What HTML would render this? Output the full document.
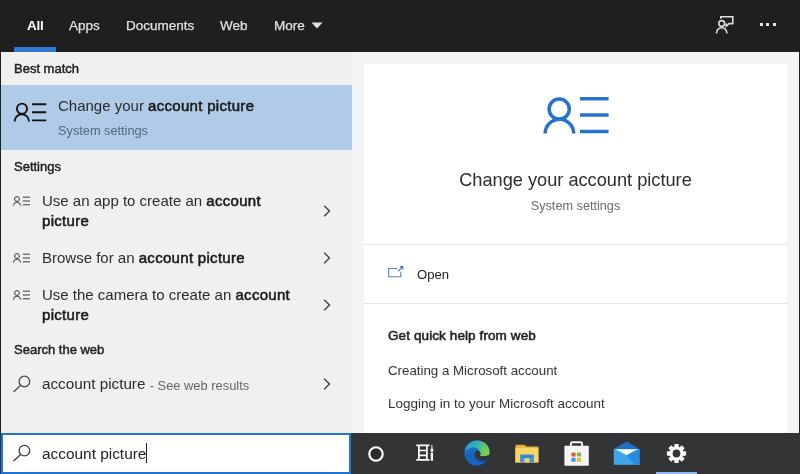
<!DOCTYPE html>
<html>
<head>
<meta charset="utf-8">
<title>Search</title>
<style>
*{box-sizing:border-box;margin:0;padding:0}
html,body{width:800px;height:474px;overflow:hidden;background:#f4f4f4;font-family:"Liberation Sans",sans-serif;color:#1a1a1a}
body{position:relative}
.abs{position:absolute}
.tab,.hdr,.item,.sub,.rt,#search span{will-change:transform}
#topbar{left:0;top:0;width:800px;height:51.8px;background:#1f1f1f}
.tab{position:absolute;top:16.5px;font-size:13.5px;-webkit-text-stroke:0.25px #e0e0e0;color:#e0e0e0;white-space:nowrap;line-height:18px}
.tab.sel{color:#fff;font-weight:bold;-webkit-text-stroke:0}
#underline{left:14.4px;top:47px;width:41.2px;height:5px;background:#2f7bd4}
#leftedge{left:0;top:0;width:1px;height:474px;background:#1f1f1f}
#left{left:0;top:52px;width:351.7px;height:381px;background:#f0f0f0}
.hdr{position:absolute;left:14px;font-size:13px;letter-spacing:0;font-weight:normal;-webkit-text-stroke:0.45px #222;color:#222;line-height:16px;white-space:nowrap}
#selrow{left:1px;top:84.7px;width:350.7px;height:65.2px;background:#afcbe8}
.item{position:absolute;left:42px;font-size:15px;line-height:20px;color:#2c2c2c;white-space:nowrap}
.item b{font-weight:normal;font-size:15px;letter-spacing:0.3px;-webkit-text-stroke:0.55px #1a1a1a;color:#1a1a1a}
.sub{position:absolute;font-size:12.75px;color:#666;white-space:nowrap}
.chev{position:absolute;left:322px;width:10px;height:14px}
#right{left:364px;top:64px;width:423px;height:370px;background:#fff}
.sep{position:absolute;left:364px;width:423px;height:1px;background:#e6e6e6}
.rt{position:absolute;white-space:nowrap}
#taskbar{left:0;top:432.6px;width:800px;height:41.4px;background:#323436}
#search{left:1px;top:432.5px;width:350.1px;height:41.5px;background:#2274d2}
#search i{position:absolute;left:2.2px;top:2.4px;right:2.1px;bottom:2.4px;background:#fff}
#search span{position:absolute;left:41px;top:11.7px;font-size:15.4px;color:#222;line-height:20px;white-space:nowrap}
#caret{left:146px;top:442.5px;width:1px;height:20.5px;background:#222}
</style>
</head>
<body>
<div id="left" class="abs"></div>
<div id="topbar" class="abs"></div>
<div id="leftedge" class="abs"></div>
<div class="abs" style="left:799px;top:0;width:1px;height:474px;background:#1f1f1f"></div>
<div class="tab sel" style="left:26.6px;letter-spacing:-0.3px">All</div>
<div class="tab" style="left:69px">Apps</div>
<div class="tab" style="left:126px">Documents</div>
<div class="tab" style="left:220px">Web</div>
<div class="tab" style="left:274px">More</div>
<svg class="abs" style="left:311px;top:22px" width="12" height="7" viewBox="0 0 12 7"><path d="M0.5 0.5h11L6 6.5z" fill="#e0e0e0"/></svg>
<div id="underline" class="abs"></div>

<!-- top-right icons -->
<svg class="abs" style="left:714px;top:15px" width="22" height="20" viewBox="0 0 22 20" fill="none" stroke="#dcdcdc" stroke-width="1.600">
<circle cx="7.700" cy="8.500" r="2.900"/>
<path d="M2.400 18.300c0.500-3.400 2.600-5.500 5.300-5.500s4.800 2.100 5.300 5.500"/>
<path d="M6.800 3.800v-2h12v6.800h-3.800l-2.800 2.600v-2.600"/>
</svg>
<div class="abs" style="left:759.800px;top:23.200px;width:3px;height:3px;background:#e4e4e4"></div>
<div class="abs" style="left:766.100px;top:23.200px;width:3px;height:3px;background:#e4e4e4"></div>
<div class="abs" style="left:772.500px;top:23.200px;width:3px;height:3px;background:#e4e4e4"></div>

<div class="hdr" style="top:61px">Best match</div>
<div id="selrow" class="abs"></div>
<svg class="abs" style="left:13px;top:101px" width="34" height="22" viewBox="0 0 34 22" fill="none" stroke="#141414" stroke-width="1.900">
<circle cx="9" cy="7.700" r="5.100"/>
<path d="M1.600 20.600A7.200 7.300 0 0 1 16 20.600"/>
<path d="M19 3.200h14.300M19 11.300h14.300M19 19.400h14.300"/>
</svg>
<div class="item" style="left:58px;top:95.6px;font-size:15px">Change your <b>account picture</b></div>
<div class="sub" style="left:58px;top:122.8px;color:#566579">System settings</div>

<div class="hdr" style="top:159px">Settings</div>

<svg class="abs" style="left:13px;top:195.500px" width="18" height="10" viewBox="0 0 18 10" fill="none" stroke="#3a3a3a" stroke-width="1">
<circle cx="4" cy="3" r="2.400"/><path d="M0.500 9.700A3.500 3.600 0 0 1 7.500 9.700M9.800 1.200h7.200M9.800 5h7.200M9.800 8.800h7.200"/>
</svg>
<div class="item" style="top:191.2px">Use an app to create an <b>account</b><br><b>picture</b></div>
<svg class="chev" style="top:204px" viewBox="0 0 10 14" fill="none" stroke="#444" stroke-width="1.400"><path d="M2.200 1.700l5.300 5.300l-5.300 5.300"/></svg>

<svg class="abs" style="left:13px;top:252.500px" width="18" height="10" viewBox="0 0 18 10" fill="none" stroke="#3a3a3a" stroke-width="1">
<circle cx="4" cy="3" r="2.400"/><path d="M0.500 9.700A3.500 3.600 0 0 1 7.500 9.700M9.800 1.200h7.200M9.800 5h7.200M9.800 8.800h7.200"/>
</svg>
<div class="item" style="top:248.4px">Browse for an <b>account picture</b></div>
<svg class="chev" style="top:251px" viewBox="0 0 10 14" fill="none" stroke="#444" stroke-width="1.400"><path d="M2.200 1.700l5.300 5.300l-5.300 5.300"/></svg>

<svg class="abs" style="left:13px;top:289.500px" width="18" height="10" viewBox="0 0 18 10" fill="none" stroke="#3a3a3a" stroke-width="1">
<circle cx="4" cy="3" r="2.400"/><path d="M0.500 9.700A3.500 3.600 0 0 1 7.500 9.700M9.800 1.200h7.200M9.800 5h7.200M9.800 8.800h7.200"/>
</svg>
<div class="item" style="top:285.2px">Use the camera to create an <b>account</b><br><b>picture</b></div>
<svg class="chev" style="top:298px" viewBox="0 0 10 14" fill="none" stroke="#444" stroke-width="1.400"><path d="M2.200 1.700l5.300 5.300l-5.300 5.300"/></svg>

<div class="hdr" style="top:342.4px">Search the web</div>
<svg class="abs" style="left:12px;top:374px" width="20" height="20" viewBox="0 0 20 20" fill="none" stroke="#4a4a4a" stroke-width="1.300"><circle cx="12.400" cy="7.500" r="5.300"/><path d="M8.600 11.300L1.500 18"/></svg>
<div class="item" style="top:374.4px;font-size:15.25px">account picture <span style="font-size:12.9px;color:#666;position:relative;top:0.8px">- See web results</span></div>
<svg class="chev" style="top:377px" viewBox="0 0 10 14" fill="none" stroke="#444" stroke-width="1.400"><path d="M2.200 1.700l5.300 5.300l-5.300 5.300"/></svg>

<!-- right panel -->
<div id="right" class="abs"></div>
<svg class="abs" style="left:542px;top:96px" width="68" height="40" viewBox="0 0 68 40" fill="none" stroke="#2573cf" stroke-width="3.500">
<circle cx="17.200" cy="13.100" r="10.100"/>
<path d="M3.100 37.500A14.300 14.300 0 0 1 31.700 37.500"/>
<path d="M38 2.700h28.600M38 19h28.600M38 35.400h28.600"/>
</svg>
<div class="rt" style="left:364px;width:423px;text-align:center;top:168px;font-size:18.2px;color:#2e2e2e;line-height:24px">Change your account picture</div>
<div class="rt" style="left:364px;width:423px;text-align:center;top:197.7px;font-size:12.7px;color:#6a6a6a;line-height:16px">System settings</div>
<div class="sep" style="top:244.4px"></div>
<svg class="abs" style="left:388px;top:264px" width="17" height="15" viewBox="0 0 17 15" fill="none" stroke="#4f87d2" stroke-width="1.100"><path d="M9.300 4.500H0.600v8.300h12.200V7.800"/><path d="M12 2.600h2.800v2.800M14.800 2.600l-4.600 4.600" stroke="#2f6fc4"/></svg>
<div class="rt" style="left:417px;top:266px;font-size:13.1px;color:#222;line-height:18px">Open</div>
<div class="sep" style="top:303px"></div>
<div class="rt" style="left:388px;top:327px;font-size:13.500px;letter-spacing:0.1px;font-weight:normal;-webkit-text-stroke:0.55px #222;color:#222;line-height:18px">Get quick help from web</div>
<div class="rt" style="left:388px;top:362px;font-size:13.3px;color:#333;line-height:18px">Creating a Microsoft account</div>
<div class="rt" style="left:388px;top:394.8px;font-size:13.500px;color:#333;line-height:18px">Logging in to your Microsoft account</div>

<!-- taskbar -->
<div id="taskbar" class="abs"></div>
<div id="search" class="abs"><i></i><span>account picture</span></div>
<svg class="abs" style="left:12px;top:443px" width="20" height="20" viewBox="0 0 20 20" fill="none" stroke="#3a3a3a" stroke-width="1.300"><circle cx="12.400" cy="7.600" r="5.300"/><path d="M8.600 11.400L1.500 18"/></svg>
<div id="caret" class="abs"></div>
<svg class="abs" style="left:366px;top:443.6px" width="20" height="20" viewBox="0 0 20 20" fill="#2a2c2e" stroke="#fff" stroke-width="2.100"><circle cx="10" cy="10" r="6.700"/></svg>

<!-- task view -->
<svg class="abs" style="left:416px;top:444px" width="19" height="18" viewBox="0 0 19 18" fill="none" stroke="#fff" stroke-width="1.700">
<path d="M0.300 1.300h13.200M0.300 15.900h13.200M2.900 1.300v14.600M10.900 1.300v14.600M2.900 6.500h8M2.900 11.300h8"/>
<path d="M15.900 8.600v8.100" stroke-width="2.300"/><rect x="14.600" y="4.700" width="2.700" height="3" fill="#fff" stroke="none"/><path d="M15.900 0.800v4" stroke-width="1"/>
</svg>
<!-- edge -->
<svg class="abs" style="left:464px;top:440.400px" width="26" height="26" viewBox="0 0 26 26">
<defs>
<linearGradient id="eg1" x1="0" y1="0" x2="1" y2="0.350"><stop offset="0" stop-color="#2b8ad9"/><stop offset="0.500" stop-color="#33b3b6"/><stop offset="1" stop-color="#74d24a"/></linearGradient>
<linearGradient id="eg2" x1="0" y1="0" x2="0.500" y2="1"><stop offset="0" stop-color="#2383dc"/><stop offset="1" stop-color="#0c4f9e"/></linearGradient>
</defs>
<circle cx="13" cy="13" r="12.600" fill="url(#eg2)"/>
<path d="M0.600 11.500C1.800 4.800 7 0.400 13 0.400c7 0 12.600 5 12.600 11.600c0 1.700-0.400 3.100-1.100 4.200L14 16c0-1.200 1.300-1.800 1.300-3.900c0-2.500-2.300-4.500-5.600-4.500c-4.300 0-7.900 2.600-9.100 3.900z" fill="url(#eg1)"/>
<path d="M9.800 9.500c-2 2-2 6.500 0.300 9.500c2.200 2.800 6.400 3.800 10.400 2.300c-2 2.600-5 4.200-8 4.200c-5.500 0-9.500-3.500-9.500-8.500c0-3.500 3-7 6.800-7.500z" fill="#1766c2"/>
<path d="M13.600 10.800c1.800 0 3 1.200 3 2.700c0 0.800-0.400 1.500-0.400 2c0 0.500 0.800 0.900 2.500 0.900c2.600 0 5.300-0.700 6.900-1.800c-0.300 1.900-1.100 3.600-2.200 5c-1.500 0.600-3.200 0.800-5 0.800c-4.500 0-7.800-2.800-7.800-5.800c0-2.200 1.300-3.800 3-3.800z" fill="#323436"/>
</svg>
<!-- folder -->
<svg class="abs" style="left:515px;top:443.5px" width="24" height="19" viewBox="0 0 24 19">
<path d="M0.500 0.800h9l1.800 1.800h12v15.900H0.500z" fill="#e6ae37"/>
<path d="M0.300 3.800h23.200v14.700H0.300z" fill="#f9d565"/>
<path d="M5 10.400h14v8.100H5z" fill="#4397db"/>
<path d="M6.300 11.600h11.400v2H6.300z" fill="#2f7fc8"/>
<path d="M9.400 14.200h5V18.500h-5z" fill="#f9d565"/>
</svg>
<!-- store -->
<svg class="abs" style="left:563px;top:440px" width="27" height="27" viewBox="0 0 27 27">
<path d="M7.900 7V3.600c0-0.900 0.500-1.400 1.400-1.400h8.400c0.900 0 1.400 0.500 1.400 1.400V7" fill="none" stroke="#f5f5f5" stroke-width="1.900"/>
<rect x="1.400" y="5.800" width="24.400" height="20" rx="0.800" fill="#f5f5f5"/>
<rect x="8.400" y="12.600" width="4.200" height="3.900" fill="#e2553d"/>
<rect x="13.800" y="12.600" width="4.200" height="3.900" fill="#7fb53a"/>
<rect x="8.400" y="17.800" width="4.200" height="3.900" fill="#2f9be3"/>
<rect x="13.800" y="17.800" width="4.200" height="3.900" fill="#f2b530"/>
</svg>
<!-- mail -->
<svg class="abs" style="left:613px;top:441px" width="27" height="24" viewBox="0 0 27 24">
<path d="M0.800 8L13.800 0.400L26.400 8V23.700H0.800z" fill="#1d6fc8"/>
<path d="M0.800 8h25.600v15.700H0.800z" fill="#3fa6ee"/>
<path d="M2.500 8.300h22L13.600 14.300z" fill="#f3f7fb"/>
<path d="M13.600 14.300L26.400 8V23.700H22z" fill="#2b8bdd"/>
</svg>
<!-- gear -->
<svg class="abs" style="left:666px;top:443px" width="21" height="21" viewBox="-10.500 -10.500 21 21">
<g fill="#fff">
<rect x="-2.200" y="-9.600" width="4.400" height="19.200" rx="0.800"/>
<rect x="-2.200" y="-9.600" width="4.400" height="19.200" rx="0.800" transform="rotate(45)"/>
<rect x="-2.200" y="-9.600" width="4.400" height="19.200" rx="0.800" transform="rotate(90)"/>
<rect x="-2.200" y="-9.600" width="4.400" height="19.200" rx="0.800" transform="rotate(135)"/>
<circle r="7"/>
</g>
<circle r="3.900" fill="#323436"/>
</svg>
<div class="abs" style="left:655.6px;top:471.700px;width:41px;height:3px;background:#8bb8ee"></div>
</body>
</html>
